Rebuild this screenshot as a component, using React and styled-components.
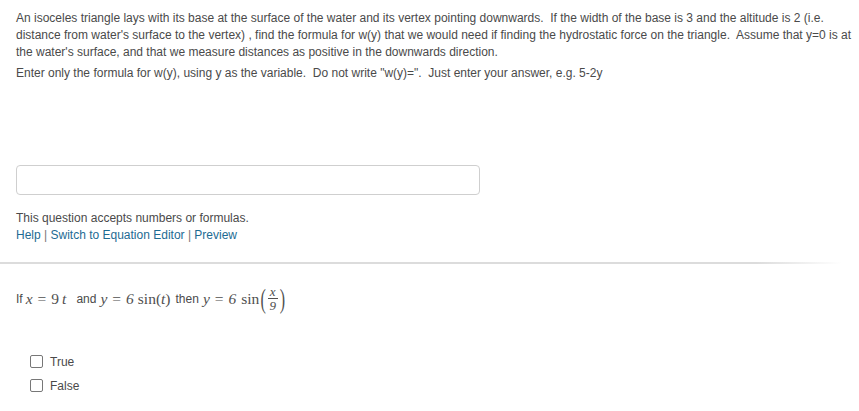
import React from "react";
import styled, { createGlobalStyle } from "styled-components";

const Global = createGlobalStyle`
  body {
    margin: 0;
    background: #fff;
    font-family: "Liberation Sans", Arial, sans-serif;
    color: #4a4a4a;
  }
`;

const serif = `"Liberation Serif", "Times New Roman", serif`;

const S = {
  Page: styled.div`
    width: 859px;
    height: 411px;
    overflow: hidden;
    display: flex;
    flex-direction: column;
  `,
  Question: styled.div`
    padding: 10px 2px 0 16px;
    font-size: 12px;
    line-height: 17px;
  `,
  Para: styled.p`
    margin: 0 0 ${(p) => p.$gap || 0}px;
  `,
  Answer: styled.input`
    display: block;
    box-sizing: border-box;
    width: 464px;
    height: 30px;
    margin: 83px 0 15px;
    border: 1px solid #cfcfcf;
    border-radius: 4px;
    outline: none;
  `,
  Hint: styled.div`
    line-height: 17px;
  `,
  Links: styled.div`
    line-height: 17px;
    color: #777;
  `,
  A: styled.a`
    color: #1d6b93;
    text-decoration: none;
  `,
  Divider: styled.div`
    height: 2px;
    margin-top: 18px;
    background: linear-gradient(to right, #dcdcdc 88%, rgba(220, 220, 220, 0) 98%);
  `,
  Second: styled.div`
    padding: 0 16px;
    font-size: 12px;
  `,
  MathLine: styled.div`
    display: flex;
    align-items: center;
    height: 28px;
    margin-top: 21px;
    white-space: pre;
  `,
  Var: styled.span`
    font-family: ${serif};
    font-style: italic;
    font-size: 15.5px;
    color: #505050;
    margin-left: ${(p) => p.$l ?? 0}px;
  `,
  Num: styled.span`
    font-family: ${serif};
    font-size: 15.5px;
    color: #505050;
    font-style: ${(p) => (p.$italic ? "italic" : "normal")};
    margin-left: ${(p) => p.$l ?? 0}px;
  `,
  Op: styled.span`
    font-family: ${serif};
    font-size: 15.5px;
    color: #505050;
    margin: 0 5px;
  `,
  Word: styled.span`
    margin-left: ${(p) => p.$l ?? 0}px;
  `,
  Paren: styled.span`
    font-family: ${serif};
    font-size: 16px;
    color: #505050;
    display: inline-block;
    transform: scaleY(1.7);
    margin-left: ${(p) => p.$l ?? 0}px;
  `,
  Frac: styled.span`
    display: inline-flex;
    flex-direction: column;
    align-items: center;
    width: 12px;
    margin-left: 1px;
    font-family: ${serif};
    font-style: italic;
    font-size: 13px;
    line-height: 10px;
    color: #505050;
  `,
  Bar: styled.span`
    width: 10px;
    height: 1px;
    background: #505050;
    margin: 1px 0 2px;
  `,
  Options: styled.div`
    margin-top: 42px;
    padding-left: 14px;
    display: flex;
    flex-direction: column;
    gap: 11px;
  `,
  Option: styled.label`
    display: flex;
    align-items: center;
    gap: 7px;
    height: 13px;
    font-size: 12px;
  `,
  Box: styled.span`
    width: 13px;
    height: 13px;
    box-sizing: border-box;
    border: 1px solid #777;
    border-radius: 2px;
    background: #fff;
  `,
};

const App = () => {
  return (
    <S.Page>
      <Global />
      <S.Question>
        <S.Para $gap={4}>
          An isoceles triangle lays with its base at the surface of the water and its vertex pointing downwards.&nbsp; If the
          width of the base is 3 and the altitude is 2 (i.e. distance from water's surface to the vertex) , find the formula
          for w(y) that we would need if finding the hydrostatic force on the triangle.&nbsp; Assume that y=0 is at the
          water's surface, and that we measure distances as positive in the downwards direction.
        </S.Para>
        <S.Para>
          Enter only the formula for w(y), using y as the variable.&nbsp; Do not write "w(y)=".&nbsp; Just enter your answer,
          e.g. 5-2y
        </S.Para>
        <S.Answer type="text" />
        <S.Hint>This question accepts numbers or formulas.</S.Hint>
        <S.Links>
          <S.A href="#">Help</S.A> | <S.A href="#">Switch to Equation Editor</S.A> | <S.A href="#">Preview</S.A>
        </S.Links>
      </S.Question>
      <S.Divider />
      <S.Second>
        <S.MathLine>
          <S.Word>If</S.Word>
          <S.Var $l={3}>x</S.Var>
          <S.Op>=</S.Op>
          <S.Num>9</S.Num>
          <S.Var $l={3}>t</S.Var>
          <S.Word $l={10}>and</S.Word>
          <S.Var $l={4}>y</S.Var>
          <S.Op>=</S.Op>
          <S.Num $italic>6</S.Num>
          <S.Num $l={4}>sin(</S.Num>
          <S.Var>t</S.Var>
          <S.Num>)</S.Num>
          <S.Word $l={5}>then</S.Word>
          <S.Var $l={4}>y</S.Var>
          <S.Op>=</S.Op>
          <S.Num $italic>6</S.Num>
          <S.Num $l={5}>sin</S.Num>
          <S.Paren $l={1}>(</S.Paren>
          <S.Frac>
            <span>x</span>
            <S.Bar />
            <span>9</span>
          </S.Frac>
          <S.Paren $l={1}>)</S.Paren>
        </S.MathLine>
        <S.Options>
          <S.Option>
            <S.Box />
            True
          </S.Option>
          <S.Option>
            <S.Box />
            False
          </S.Option>
        </S.Options>
      </S.Second>
    </S.Page>
  );
};

export default App;
